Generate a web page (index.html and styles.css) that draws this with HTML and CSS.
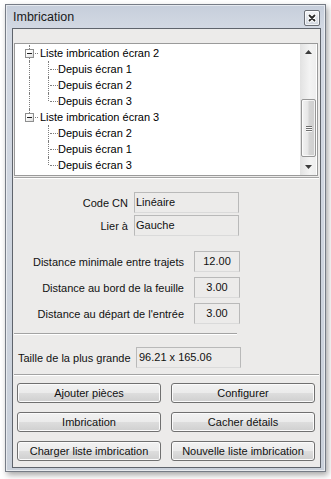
FILE: index.html
```html
<!DOCTYPE html>
<html>
<head>
<meta charset="utf-8">
<link rel="stylesheet" href="styles.css">
</head>
<body>
<div class="win">
  <div class="titlebar">
    <span class="title">Imbrication</span>
    <span class="close">
      <svg width="14" height="14" viewBox="0 0 14 14">
        <path d="M4.5 4.5 L9.5 9.5 M9.5 4.5 L4.5 9.5" stroke="#ffffff" stroke-width="4" stroke-linecap="round"/>
        <path d="M4.5 4.5 L9.5 9.5 M9.5 4.5 L4.5 9.5" stroke="#2b2b2b" stroke-width="1.8" stroke-linecap="round"/>
      </svg>
    </span>
  </div>
  <div class="panel">
    <div class="tree">
      <div class="tree-list">
        <div class="row">
          <span class="cell cp"><i class="vfull"></i><i class="h hp"></i><span class="exp"><b></b></span></span>
          <span class="lbl">Liste imbrication écran 2</span>
        </div>
        <div class="row">
          <span class="cell c1"><i class="vfull"></i></span>
          <span class="cell c2"><i class="vfull"></i><i class="h hc"></i></span>
          <span class="lbl">Depuis écran 1</span>
        </div>
        <div class="row">
          <span class="cell c1"><i class="vfull"></i></span>
          <span class="cell c2"><i class="vfull"></i><i class="h hc"></i></span>
          <span class="lbl">Depuis écran 2</span>
        </div>
        <div class="row">
          <span class="cell c1"><i class="vfull"></i></span>
          <span class="cell c2"><i class="vtop"></i><i class="h hc"></i></span>
          <span class="lbl">Depuis écran 3</span>
        </div>
        <div class="row">
          <span class="cell cp"><i class="vtop"></i><i class="h hp"></i><span class="exp"><b></b></span></span>
          <span class="lbl">Liste imbrication écran 3</span>
        </div>
        <div class="row">
          <span class="cell c1"></span>
          <span class="cell c2"><i class="vfull"></i><i class="h hc"></i></span>
          <span class="lbl">Depuis écran 2</span>
        </div>
        <div class="row">
          <span class="cell c1"></span>
          <span class="cell c2"><i class="vfull"></i><i class="h hc"></i></span>
          <span class="lbl">Depuis écran 1</span>
        </div>
        <div class="row">
          <span class="cell c1"></span>
          <span class="cell c2"><i class="vtop"></i><i class="h hc"></i></span>
          <span class="lbl">Depuis écran 3</span>
        </div>
      </div>
      <div class="vscroll">
        <div class="sb-btn">
          <svg width="7" height="4" viewBox="0 0 7 4"><path d="M0 4 L3.5 0 L7 4 Z" fill="#3c3c3c"/></svg>
        </div>
        <div class="sb-track">
          <div class="sb-thumb">
            <span class="grip"></span><span class="grip"></span><span class="grip"></span>
          </div>
        </div>
        <div class="sb-btn">
          <svg width="7" height="4" viewBox="0 0 7 4"><path d="M0 0 L7 0 L3.5 4 Z" fill="#3c3c3c"/></svg>
        </div>
      </div>
    </div>

    <div class="sep sep-top"></div>

    <div class="frow row-code">
      <span class="flbl lw-a">Code CN</span>
      <span class="field fw-a">Linéaire</span>
    </div>
    <div class="frow row-lier">
      <span class="flbl lw-a">Lier à</span>
      <span class="field fw-a">Gauche</span>
    </div>

    <div class="frow row-d1">
      <span class="flbl lw-b">Distance minimale entre trajets</span>
      <span class="field fw-b">12.00</span>
    </div>
    <div class="frow row-d">
      <span class="flbl lw-b">Distance au bord de la feuille</span>
      <span class="field fw-b">3.00</span>
    </div>
    <div class="frow row-d">
      <span class="flbl lw-b">Distance au départ de l'entrée</span>
      <span class="field fw-b">3.00</span>
    </div>

    <div class="sep sep-short"></div>

    <div class="frow row-taille">
      <span class="flbl lw-c">Taille de la plus grande</span>
      <span class="field fw-c">96.21 x 165.06</span>
    </div>

    <div class="sep sep-bottom"></div>

    <div class="btns">
      <span class="btn">Ajouter pièces</span>
      <span class="btn">Configurer</span>
      <span class="btn">Imbrication</span>
      <span class="btn">Cacher détails</span>
      <span class="btn">Charger liste imbrication</span>
      <span class="btn">Nouvelle liste imbrication</span>
    </div>
  </div>
</div>
</body>
</html>
```

FILE: styles.css
```css
* { box-sizing: border-box; }

html, body {
  margin: 0;
  padding: 0;
  background: #ffffff;
}

body {
  font-family: "Liberation Sans", Arial, sans-serif;
  font-size: 11px;
  color: #000;
  width: 331px;
  height: 479px;
  overflow: hidden;
}

.win {
  margin: 4px 0 0 5px;
  width: 321px;
  height: 468px;
  border: 1px solid #767c86;
  background: linear-gradient(to bottom, #c6cedb 0px, #d3d9e3 24px, #c9d0da 100%);
  box-shadow: 2px 3px 6px rgba(0, 0, 0, 0.35), inset 0 0 0 1px rgba(255, 255, 255, 0.55);
  display: flex;
  flex-direction: column;
}

.titlebar {
  height: 23px;
  display: flex;
  align-items: flex-start;
  justify-content: space-between;
  padding: 0 5px 0 7px;
}

.title {
  font-size: 12.5px;
  color: #1a1a1a;
  line-height: 14px;
  margin-top: 5px;
}

.close {
  margin-top: 5px;
  width: 16px;
  height: 16px;
  border: 1px solid #6a6e76;
  border-radius: 2px;
  background: linear-gradient(to bottom, #f4f6f9 0%, #dfe3ea 50%, #cfd5de 100%);
  display: flex;
  align-items: center;
  justify-content: center;
  box-shadow: inset 0 0 0 1px rgba(255, 255, 255, 0.7);
}

.close svg { display: block; }

.panel {
  margin: 0 4px 0 6px;
  height: 440px;
  border: 1px solid #5f646c;
  background: #ecebea;
  display: flex;
  flex-direction: column;
}

/* ---------- tree ---------- */
.tree {
  margin: 14px 2px 0 1px;
  height: 133px;
  border: 1px solid #9a9a9a;
  background: #fff;
  display: flex;
  flex-shrink: 0;
}

.tree-list {
  flex: 1;
  padding-top: 1px;
  display: flex;
  flex-direction: column;
}

.row {
  height: 16px;
  display: flex;
  align-items: center;
}

.cell {
  display: grid;
  height: 16px;
  flex-shrink: 0;
}

.cell > * {
  grid-area: 1 / 1;
}

.cp { width: 24px; }
.c1 { width: 19px; }
.c2 { width: 24px; }

.vfull {
  margin-left: 14px;
  width: 1px;
  height: 16px;
  border-left: 1px dotted #7d7d7d;
}

.vtop {
  margin-left: 14px;
  width: 1px;
  height: 8px;
  align-self: start;
  border-left: 1px dotted #7d7d7d;
}

.h {
  align-self: start;
  margin-top: 8px;
  margin-left: 16px;
  height: 1px;
  border-top: 1px dotted #7d7d7d;
}

.hp { width: 7px; }
.hc { width: 8px; }

.exp {
  margin-left: 10px;
  align-self: center;
  width: 9px;
  height: 9px;
  border: 1px solid #8e8f8f;
  background: linear-gradient(to bottom right, #ffffff 30%, #dcdcdc 100%);
  display: flex;
  align-items: center;
  justify-content: center;
}

.exp b {
  display: block;
  width: 5px;
  height: 1px;
  background: #1e1e1e;
}

.lbl {
  padding-left: 1px;
  white-space: nowrap;
  line-height: 16px;
}

.c2 + .lbl { padding-left: 0; }

/* ---------- scrollbar ---------- */
.vscroll {
  width: 16px;
  margin-right: 1px;
  display: flex;
  flex-direction: column;
  background: linear-gradient(to right, #e2e2e2, #f3f3f3 60%, #eeeeee);
}

.sb-btn {
  height: 16px;
  display: flex;
  align-items: center;
  justify-content: center;
}

.sb-btn svg { display: block; }

.sb-track {
  flex: 1;
  padding-top: 39px;
}

.sb-thumb {
  height: 58px;
  margin: 0 0 0 1px;
  width: 15px;
  border: 1px solid #969696;
  border-radius: 2px;
  background: linear-gradient(to right, #f3f3f3 0%, #e6e6e6 45%, #d4d4d4 55%, #cfcfcf 100%);
  box-shadow: inset 0 0 0 1px rgba(255, 255, 255, 0.7);
  display: flex;
  flex-direction: column;
  align-items: center;
  justify-content: center;
  gap: 1px;
}

.grip {
  display: block;
  width: 6px;
  height: 1px;
  background: #6e6e6e;
  box-shadow: 0 1px 0 #f8f8f8;
}

/* ---------- separators ---------- */
.sep {
  height: 2px;
  border-top: 1px solid #a3a3a3;
  border-bottom: 1px solid #ffffff;
  flex-shrink: 0;
}

.sep-top { margin: 1px 1px 0 1px; }
.sep-short { margin: 9px 0 0 1px; width: 223px; }
.sep-bottom { margin: 6px 1px 0 1px; }

/* ---------- form rows ---------- */
.frow {
  display: flex;
  align-items: center;
  flex-shrink: 0;
}

.row-code { margin-top: 13px; }
.row-lier { margin-top: 2px; }
.row-d1 { margin-top: 15px; }
.row-d { margin-top: 5px; }
.row-taille { margin-top: 12px; }

.flbl {
  white-space: nowrap;
  color: #111;
}

.lw-a { width: 115px; text-align: right; margin-right: 6px; }
.lw-b { width: 171px; text-align: right; margin-right: 10px; }
.lw-c { width: 123px; padding-left: 5px; }

.field {
  height: 21px;
  line-height: 19px;
  border: 1px solid #b9b9b9;
  border-bottom-color: #dadada;
  background: #ecebea;
  white-space: nowrap;
  color: #111;
}

.fw-a { width: 105px; padding-left: 1px; }
.fw-b { width: 46px; text-align: center; }
.fw-c { width: 105px; padding-left: 2px; }

/* ---------- buttons ---------- */
.btns {
  margin: 7px 5px 0 4px;
  display: grid;
  grid-template-columns: 144px 144px;
  column-gap: 10px;
  row-gap: 9px;
}

.btn {
  height: 20px;
  border: 1px solid #707070;
  border-radius: 3px;
  background: linear-gradient(to bottom, #f2f2f2 0%, #ebebeb 48%, #dddddd 52%, #cfcfcf 100%);
  box-shadow: inset 0 0 0 1px #fbfbfb;
  display: flex;
  align-items: center;
  justify-content: center;
  white-space: nowrap;
  color: #111;
}
```
